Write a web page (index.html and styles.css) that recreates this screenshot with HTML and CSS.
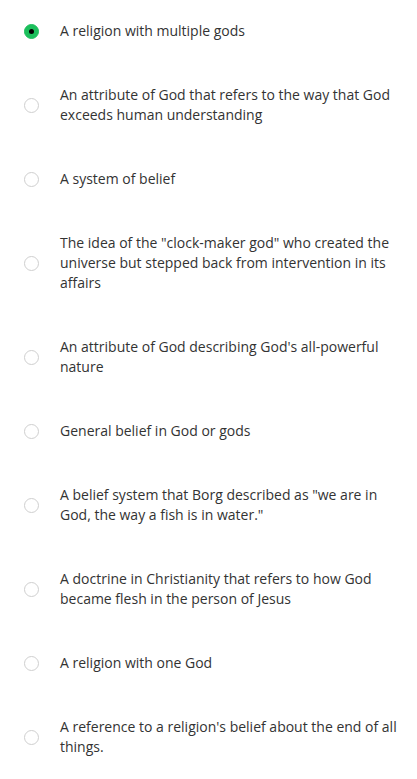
FILE: index.html
```html
<!DOCTYPE html>
<html lang="en">
<head>
<meta charset="utf-8">
<title>Quiz options</title>
<link rel="stylesheet" href="styles.css">
</head>
<body>
<ul class="options">
  <li class="option selected"><span class="radio"></span><span class="label">A religion with multiple gods</span></li>
  <li class="option"><span class="radio"></span><span class="label">An attribute of God that refers to the way that God exceeds human understanding</span></li>
  <li class="option"><span class="radio"></span><span class="label">A system of belief</span></li>
  <li class="option"><span class="radio"></span><span class="label">The idea of the "clock-maker god" who created the universe but stepped back from intervention in its affairs</span></li>
  <li class="option"><span class="radio"></span><span class="label">An attribute of God describing God's all-powerful nature</span></li>
  <li class="option"><span class="radio"></span><span class="label">General belief in God or gods</span></li>
  <li class="option"><span class="radio"></span><span class="label">A belief system that Borg described as "we are in God, the way a fish is in water."</span></li>
  <li class="option"><span class="radio"></span><span class="label">A doctrine in Christianity that refers to how God became flesh in the person of Jesus</span></li>
  <li class="option"><span class="radio"></span><span class="label">A religion with one God</span></li>
  <li class="option"><span class="radio"></span><span class="label">A reference to a religion's belief about the end of all things.</span></li>
</ul>
</body>
</html>
```
FILE: styles.css
```css
html, body {
  margin: 0;
  padding: 0;
  background: #ffffff;
}
body {
  font-family: "Open Sans", "Liberation Sans", sans-serif;
  font-size: 14px;
  line-height: 20px;
  color: #333333;
}
.options {
  list-style: none;
  margin: 0;
  padding: 21px 12px 0 24px;
  display: flex;
  flex-direction: column;
  gap: 44px;
}
.option {
  display: flex;
  align-items: center;
  gap: 21px;
}
.radio {
  flex: none;
  box-sizing: border-box;
  width: 15px;
  height: 15px;
  border-radius: 50%;
  border: 1px solid #cfcfcf;
  background: #ffffff;
  display: flex;
  align-items: center;
  justify-content: center;
}
.selected .radio {
  border-color: #1cbf5c;
  background: #1cbf5c;
}
.selected .radio::after {
  content: "";
  width: 5px;
  height: 5px;
  border-radius: 50%;
  background: #000000;
}
.label {
  flex: 1;
}
```
